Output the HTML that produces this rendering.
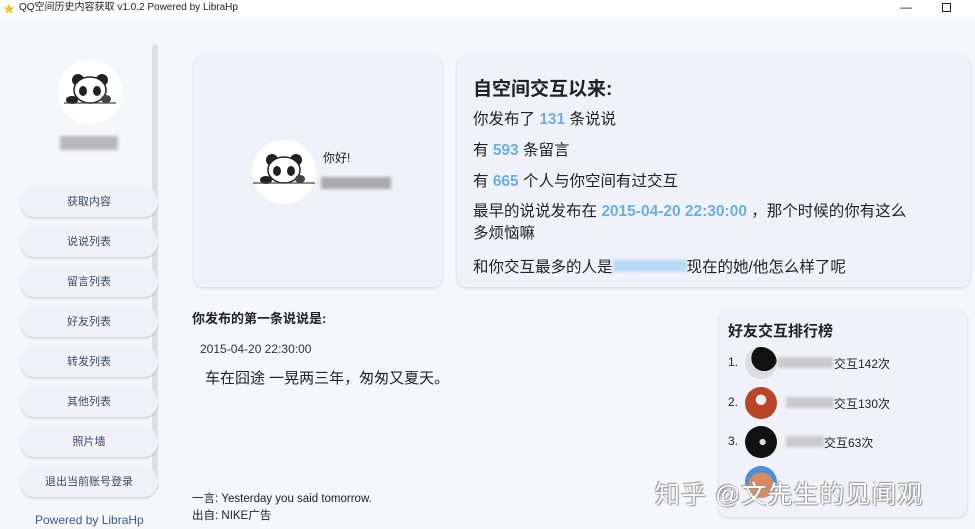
<!DOCTYPE html>
<html><head><meta charset="utf-8"><style>
*{margin:0;padding:0;box-sizing:border-box}
body{width:975px;height:529px;overflow:hidden;background:#f6f7fb;font-family:"Liberation Sans","Noto Sans CJK SC",sans-serif;position:relative;color:#222}
.abs{position:absolute}
.title{left:0;top:0;width:975px;height:18px;background:#fff;font-size:10px;line-height:16px;color:#222}
.btn{position:absolute;left:20px;width:138px;height:30px;border-radius:15px;background:#f1f2f7;box-shadow:0 2px 2px rgba(0,0,0,.12);font-size:11px;color:#3b4a6a;text-align:center;line-height:30px}
.card{position:absolute;background:#f1f2f9;border-radius:10px;box-shadow:0 1px 3px rgba(0,0,0,.15)}
.blur{position:absolute;background:#c9c9cc;filter:blur(1.5px)}
.n{color:#6aaee6;font-weight:bold}
.ln{position:absolute;left:473px;font-size:15.5px;color:#222}
.av{position:absolute;width:32px;height:32px;border-radius:50%}
.rk{position:absolute;font-size:12px;color:#222}
</style></head><body>
<div class="abs title"><span style="position:absolute;left:3px;top:1px;color:#f0c020;font-size:12px">★</span><span style="position:absolute;left:19px">QQ空间历史内容获取 v1.0.2 Powered by LibraHp</span>
<span style="position:absolute;left:900px;top:-1px;font-size:12px">—</span><span style="position:absolute;left:942px;top:3px;width:9px;height:9px;border:1px solid #222"></span></div>
<div class="abs" style="left:152px;top:44px;width:6px;height:446px;background:#dfe0e4;border-radius:3px"></div>
<svg class="abs" style="left:58px;top:60px" width="64" height="64" viewBox="0 0 64 64"><circle cx="32" cy="32" r="32" fill="#fff"/><circle cx="20" cy="20" r="6" fill="#222"/><circle cx="44" cy="20" r="6" fill="#222"/><ellipse cx="32" cy="30" rx="16" ry="13" fill="#fff" stroke="#222" stroke-width="1.5"/><ellipse cx="25" cy="31" rx="4" ry="5" fill="#222"/><ellipse cx="39" cy="31" rx="4" ry="5" fill="#222"/><ellipse cx="14" cy="40" rx="6" ry="4" fill="#222"/><ellipse cx="48" cy="39" rx="5" ry="4" fill="#444"/><line x1="6" y1="43" x2="58" y2="43" stroke="#444" stroke-width="1.2"/></svg>
<div class="blur" style="left:60px;top:136px;width:58px;height:14px;background:#b8b8bb"></div>
<div class="btn" style="top:187px">获取内容</div>
<div class="btn" style="top:227px">说说列表</div>
<div class="btn" style="top:267px">留言列表</div>
<div class="btn" style="top:307px">好友列表</div>
<div class="btn" style="top:347px">转发列表</div>
<div class="btn" style="top:387px">其他列表</div>
<div class="btn" style="top:427px">照片墙</div>
<div class="btn" style="top:467px">退出当前账号登录</div>
<div class="abs" style="left:35px;top:513px;font-size:12px;color:#3b5a8a">Powered by LibraHp</div>

<div class="card" style="left:194px;top:55px;width:248px;height:232px"></div>
<svg class="abs" style="left:252px;top:140px" width="64" height="64" viewBox="0 0 64 64"><circle cx="32" cy="32" r="32" fill="#fff"/><circle cx="20" cy="20" r="6" fill="#222"/><circle cx="44" cy="20" r="6" fill="#222"/><ellipse cx="32" cy="30" rx="16" ry="13" fill="#fff" stroke="#222" stroke-width="1.5"/><ellipse cx="25" cy="31" rx="4" ry="5" fill="#222"/><ellipse cx="39" cy="31" rx="4" ry="5" fill="#222"/><ellipse cx="14" cy="40" rx="6" ry="4" fill="#222"/><ellipse cx="48" cy="39" rx="5" ry="4" fill="#444"/><line x1="1" y1="43" x2="63" y2="43" stroke="#444" stroke-width="1.2"/></svg>
<div class="abs" style="left:323px;top:149px;font-size:12px">你好!</div>
<div class="blur" style="left:321px;top:177px;width:70px;height:12px;background:#aaa"></div>

<div class="card" style="left:457px;top:55px;width:513px;height:232px"></div>
<div class="abs" style="left:473px;top:74px;font-size:19px;font-weight:bold">自空间交互以来:</div>
<div class="ln" style="top:107px">你发布了 <span class="n">131</span> 条说说</div>
<div class="ln" style="top:138px">有 <span class="n">593</span> 条留言</div>
<div class="ln" style="top:169px">有 <span class="n">665</span> 个人与你空间有过交互</div>
<div class="ln" style="top:201px;width:475px;line-height:22px">最早的说说发布在 <span class="n">2015-04-20 22:30:00</span> ，那个时候的你有这么<br>多烦恼嘛</div>
<div class="ln" style="top:255px">和你交互最多的人是<span style="display:inline-block;width:74px;height:12px;background:#b5d8f5;filter:blur(1.5px)"></span>现在的她/他怎么样了呢</div>

<div class="abs" style="left:192px;top:308px;font-size:13px;font-weight:bold">你发布的第一条说说是:</div>
<div class="abs" style="left:200px;top:342px;font-size:12px;color:#333">2015-04-20 22:30:00</div>
<div class="abs" style="left:205px;top:367px;font-size:15px">车在囧途 一晃两三年，匆匆又夏天。</div>
<div class="abs" style="left:192px;top:490px;font-size:11.5px">一言: Yesterday you said tomorrow.</div>
<div class="abs" style="left:192px;top:507px;font-size:11.5px">出自: NIKE广告</div>

<div class="card" style="left:719px;top:310px;width:248px;height:207px"></div>
<div class="abs" style="left:728px;top:320px;font-size:15px;font-weight:bold">好友交互排行榜</div>
<div class="rk" style="left:728px;top:355px">1.</div><div class="av" style="left:745px;top:347px;background:radial-gradient(circle at 60% 35%,#111 45%,#ddd 46%)"></div><div class="blur" style="left:778px;top:357px;width:55px;height:11px"></div><div class="rk" style="left:834px;top:355px">交互142次</div>
<div class="rk" style="left:728px;top:395px">2.</div><div class="av" style="left:745px;top:387px;background:radial-gradient(circle at 50% 40%,#eee 20%,#b8452a 22%)"></div><div class="blur" style="left:786px;top:397px;width:48px;height:11px"></div><div class="rk" style="left:834px;top:395px">交互130次</div>
<div class="rk" style="left:728px;top:434px">3.</div><div class="av" style="left:745px;top:426px;background:radial-gradient(circle at 55% 50%,#ddd 12%,#111 14%)"></div><div class="blur" style="left:786px;top:436px;width:38px;height:11px"></div><div class="rk" style="left:824px;top:434px">交互63次</div>
<div class="av" style="left:745px;top:466px;background:radial-gradient(circle at 50% 60%,#d88a60 50%,#4a8fd8 52%)"></div>
<div class="abs" style="left:655px;top:475px;font-size:25px;color:#fff;text-shadow:0 0 1px #888,1px 1px 1px #999,-1px -1px 1px #999;letter-spacing:1px">知乎 @文先生的见闻观</div>
</body></html>
